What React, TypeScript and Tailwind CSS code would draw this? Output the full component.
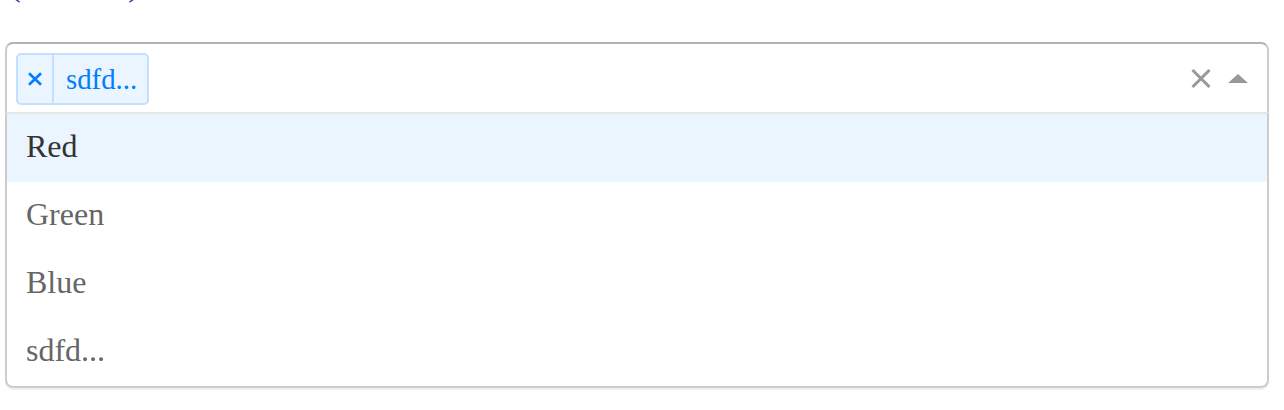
import { useState } from 'react';

interface Option {
    value: string;
    label: string;
}

const options: Option[] = [
    { value: 'red', label: 'Red' },
    { value: 'green', label: 'Green' },
    { value: 'blue', label: 'Blue' },
    { value: 'sdfd', label: 'sdfd...' },
];

const App = () => {
    const [selected, setSelected] = useState<Option[]>([options[3]]);
    const [focused, setFocused] = useState('red');

    return (
        <div className="h-[410px] overflow-hidden bg-white font-['Liberation_Serif',serif]">
            <div className="-mt-[33px] mb-[39px] pl-[10px] text-[32px] leading-[36px] text-[#551a8b]">(show all)</div>

            <div className="ml-[5px] w-[1264px]">
                {/* control */}
                <div className="flex h-[70px] items-center rounded-t-[8px] border-x-2 border-t-2 border-x-[#cccccc] border-t-[#b3b3b3] bg-white pl-[9px]">
                    <div className="flex flex-1 items-center gap-2 pt-[2px]">
                        {selected.map((opt) => (
                            <div
                                key={opt.value}
                                className="flex h-[52px] items-stretch rounded-[5px] border-2 border-[#c2e0ff] bg-[#ebf5ff] text-[#007eff]"
                            >
                                <span
                                    className="flex w-[36px] cursor-pointer items-center justify-center border-r-2 border-[#c2e0ff]"
                                    onClick={() => setSelected([])}
                                >
                                    <svg width="16" height="14" viewBox="0 0 16 14">
                                        <path d="M2 1.2 L14 12.8 M14 1.2 L2 12.8" stroke="#007eff" strokeWidth="2.6" />
                                    </svg>
                                </span>
                                <span className="flex items-center pl-[12px] pr-[10px] text-[28.8px] leading-[36px]">{opt.label}</span>
                            </div>
                        ))}
                    </div>
                    <span className="flex w-[34px] cursor-pointer items-center justify-center" onClick={() => setSelected([])}>
                        <svg width="20" height="19" viewBox="0 0 20 19">
                            <path d="M1.5 1 L18.5 18 M18.5 1 L1.5 18" stroke="#999999" strokeWidth="3" />
                        </svg>
                    </span>
                    <span className="mr-[9px] flex w-[40px] items-center justify-center">
                        <svg width="20" height="9" viewBox="0 0 20 9">
                            <polygon points="0,9 10,0 20,9" fill="#999999" />
                        </svg>
                    </span>
                </div>

                {/* menu */}
                <div className="rounded-b-[8px] border-x-2 border-b-2 border-t-2 border-x-[#cccccc] border-b-[#cccccc] border-t-[#e6e6e6] bg-white shadow-[0_2px_0_rgba(0,0,0,0.06)]">
                    {options.map((opt) => (
                        <div
                            key={opt.value}
                            onMouseEnter={() => setFocused(opt.value)}
                            className={`h-[68px] cursor-pointer pl-[19px] pt-[14px] text-[32px] leading-[36px] ${
                                focused === opt.value ? 'bg-[#ebf5ff] text-[#333333]' : 'text-[#666666]'
                            } ${opt.value === 'sdfd' ? 'rounded-b-[6px]' : ''}`}
                        >
                            {opt.label}
                        </div>
                    ))}
                </div>
            </div>
        </div>
    );
};

export default App;
